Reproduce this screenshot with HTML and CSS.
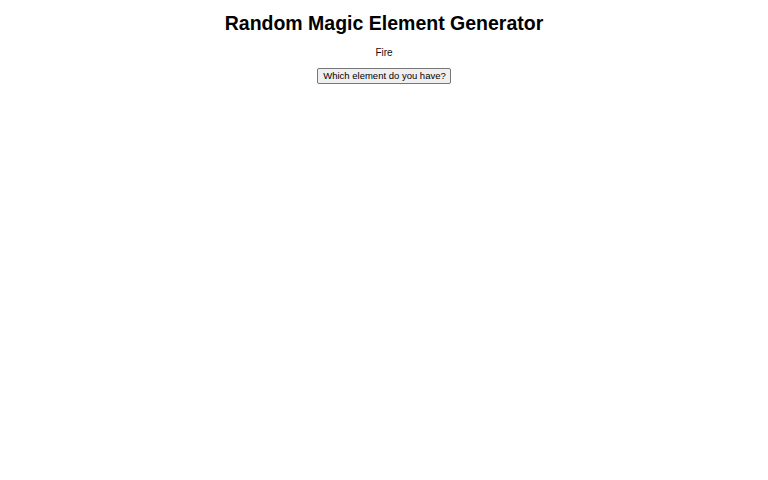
FILE: index.html
```html
<!DOCTYPE html>
<html lang="en">
<head>
<meta charset="utf-8">
<title>Random Magic Element Generator</title>
<link rel="stylesheet" href="styles.css">
</head>
<body>
<main class="generator">
  <h1 class="generator-title">Random Magic Element Generator</h1>
  <p class="generator-result">Fire</p>
  <button class="generator-button" type="button">Which element do you have?</button>
</main>
</body>
</html>
```
FILE: styles.css
```css
body {
  margin: 8px;
  background: #ffffff;
  color: #000000;
  font-family: "Liberation Sans", Arial, sans-serif;
}

.generator {
  display: flex;
  flex-direction: column;
  align-items: center;
}

.generator-title {
  font-size: 19.5px;
  font-weight: bold;
  margin: 4px 0 0;
  line-height: 22px;
}

.generator-result {
  font-size: 10px;
  margin: 12px 0 0;
  line-height: 14px;
  color: #111111;
}

.generator-button {
  margin-top: 8px;
  font-family: "Liberation Sans", Arial, sans-serif;
  font-size: 9.5px;
  line-height: 12px;
  padding: 1px 4px 1px 5px;
  border: 1px solid #767676;
  border-radius: 2px;
  background: #efefef;
  color: #000000;
}
```
